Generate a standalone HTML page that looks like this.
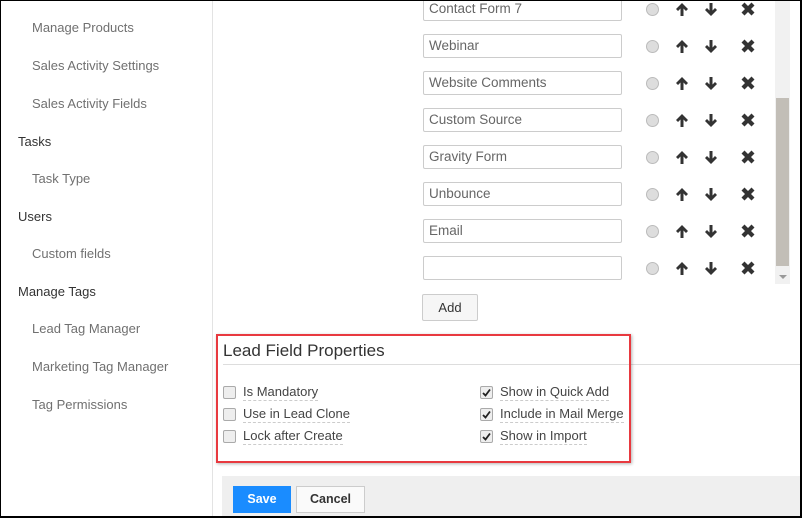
<!DOCTYPE html>
<html><head><style>
body{margin:0;width:802px;height:518px;overflow:hidden;background:#fff;font-family:"Segoe UI","Liberation Sans",sans-serif;position:relative}
.frame{position:absolute;left:0;top:0;border:1px solid #000;border-width:1px 2px 2px 1px;box-sizing:border-box;width:802px;height:518px;z-index:10;pointer-events:none}
.side{position:absolute;left:0;top:0;width:212px;height:518px;border-right:1px solid #e3e3e3}
.si{position:absolute;left:32px;font-size:13px;color:#707070}
.sh{position:absolute;left:18px;font-size:13px;color:#333}
.inp{position:absolute;left:423px;width:199px;height:24px;border:1px solid #ccc;border-radius:2px;box-sizing:border-box;font-family:"Liberation Sans",sans-serif;font-size:13.5px;color:#666;padding:2px 5px;line-height:17px}
.ic{position:absolute}
.cb{position:absolute;width:11px;height:11px;border:1px solid #aaa;background:#eee;border-radius:2px}
.lb{position:absolute;font-size:13px;color:#444;border-bottom:1px dashed #ccc;line-height:17px}
</style></head><body>
<div class="side">
<div class="si" style="top:20px">Manage Products</div>
<div class="si" style="top:58px">Sales Activity Settings</div>
<div class="si" style="top:96px">Sales Activity Fields</div>
<div class="sh" style="top:134px">Tasks</div>
<div class="si" style="top:171px">Task Type</div>
<div class="sh" style="top:209px">Users</div>
<div class="si" style="top:246px">Custom fields</div>
<div class="sh" style="top:284px">Manage Tags</div>
<div class="si" style="top:321px">Lead Tag Manager</div>
<div class="si" style="top:359px">Marketing Tag Manager</div>
<div class="si" style="top:397px">Tag Permissions</div>
</div>

<div id="rows"></div>
<script>
var names=["Contact Form 7","Webinar","Website Comments","Custom Source","Gravity Form","Unbounce","Email",""];
var h="";
names.forEach(function(n,i){var t=-3+i*37;var c=t+12;
h+='<div class="inp" style="top:'+t+'px">'+n+'</div>';
h+='<div class="ic" style="left:646px;top:'+(c-6)+'px;width:11px;height:11px;border-radius:50%;background:#ddd;border:1px solid #bbb"></div>';
h+='<svg class="ic" style="left:675px;top:'+(c-7)+'px" width="14" height="15" viewBox="0 0 14 15"><path d="M7 1 L1 7 L3 9 L5.5 6.5 V14 H8.5 V6.5 L11 9 L13 7 Z" fill="#333"/></svg>';
h+='<svg class="ic" style="left:704px;top:'+(c-7)+'px" width="14" height="15" viewBox="0 0 14 15"><path d="M7 14 L1 8 L3 6 L5.5 8.5 V1 H8.5 V8.5 L11 6 L13 8 Z" fill="#333"/></svg>';
h+='<svg class="ic" style="left:740px;top:'+(c-8)+'px" width="16" height="16" viewBox="0 0 16 16"><path d="M1.5 4.5 L4.5 1.5 L8 5 L11.5 1.5 L14.5 4.5 L11 8 L14.5 11.5 L11.5 14.5 L8 11 L4.5 14.5 L1.5 11.5 L5 8 Z" fill="#333"/></svg>';
});
document.getElementById('rows').innerHTML=h;
</script>
<div style="position:absolute;left:775px;top:0;width:15px;height:284px;background:#f1f1f1"></div>
<div style="position:absolute;left:776px;top:98px;width:13px;height:168px;background:#c2beb7"></div>
<div style="position:absolute;left:779px;top:275px;border:4px solid transparent;border-top:4px solid #999"></div>

<div style="position:absolute;left:422px;top:294px;width:56px;height:27px;border:1px solid #ccc;background:#f6f6f6;box-sizing:border-box;font-size:13px;color:#333;text-align:center;line-height:25px;border-radius:2px">Add</div>

<div style="position:absolute;left:223px;top:364px;width:579px;height:1px;background:#ddd"></div>
<div style="position:absolute;left:223px;top:341px;font-size:17px;color:#333">Lead Field Properties</div>
<div style="position:absolute;left:216px;top:334px;width:415px;height:129px;border:2px solid #e8393f;box-sizing:border-box;box-shadow:1px 1px 3px rgba(0,0,0,.3)"></div>

<div class="cb" style="left:223px;top:386px"></div><div class="lb" style="left:243px;top:383px">Is Mandatory</div>
<div class="cb" style="left:223px;top:408px"></div><div class="lb" style="left:243px;top:405px">Use in Lead Clone</div>
<div class="cb" style="left:223px;top:430px"></div><div class="lb" style="left:243px;top:427px">Lock after Create</div>
<div class="cb" style="left:480px;top:386px"></div><div class="lb" style="left:500px;top:383px">Show in Quick Add</div>
<div class="cb" style="left:480px;top:408px"></div><div class="lb" style="left:500px;top:405px">Include in Mail Merge</div>
<div class="cb" style="left:480px;top:430px"></div><div class="lb" style="left:500px;top:427px">Show in Import</div>
<svg style="position:absolute;left:481px;top:387px" width="11" height="55"><g fill="none" stroke="#222" stroke-width="1.8"><path d="M2 6 L4.5 8.5 L9 2.5"/><path d="M2 28 L4.5 30.5 L9 24.5"/><path d="M2 50 L4.5 52.5 L9 46.5"/></g></svg>

<div style="position:absolute;left:222px;top:476px;width:580px;height:42px;background:#efefef"></div>
<div style="position:absolute;left:233px;top:486px;width:58px;height:27px;background:#1a8cff;color:#fff;font-size:12.5px;font-weight:bold;text-align:center;line-height:27px">Save</div>
<div style="position:absolute;left:296px;top:486px;width:69px;height:27px;background:#fafafa;border:1px solid #ccc;box-sizing:border-box;color:#333;font-size:12.5px;font-weight:bold;text-align:center;line-height:25px">Cancel</div>
<div class="frame"></div>
</body></html>
